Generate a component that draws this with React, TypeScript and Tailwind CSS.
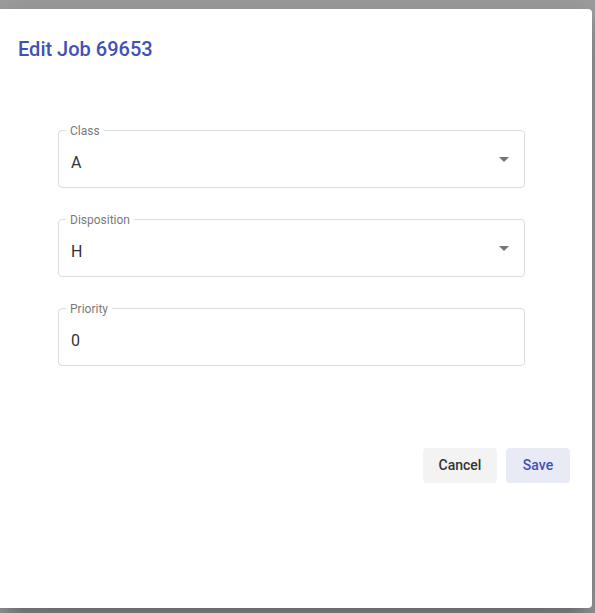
import { ReactNode } from "react";

const font = { fontFamily: "Roboto, 'Liberation Sans', sans-serif" };

const ArrowDrop = () => (
  <svg
    viewBox="0 0 24 24"
    className="absolute right-[8px] top-[16px] h-6 w-6 fill-[#757575]"
  >
    <path d="M7 10l5 5 5-5z" />
  </svg>
);

const Field = ({
  label,
  value,
  select,
}: {
  label: string;
  value: string;
  select?: boolean;
}) => (
  <div className="relative h-[58px] w-[467px] rounded-[4px] border border-[#dcdcdc]">
    <span className="absolute left-[7px] top-[-6px] bg-white px-[4px] text-[12px] leading-[12px] text-[#7a7a7a]">
      {label}
    </span>
    <div className="pl-3 pt-[20px] text-[16px] leading-[24px] text-[#333]">
      {value}
    </div>
    {select && <ArrowDrop />}
  </div>
);

const Btn = ({
  children,
  className,
}: {
  children: ReactNode;
  className: string;
}) => (
  <button
    className={`h-[35px] rounded-[4px] text-[14px] font-medium ${className}`}
  >
    {children}
  </button>
);

export default function App() {
  return (
    <div
      style={font}
      className="h-[613px] w-[595px] overflow-hidden bg-[#a0a0a0] pt-[9px]"
    >
      <div className="flex h-[599px] w-[592px] flex-col rounded-r-[4px] bg-white shadow-[0_11px_15px_-7px_rgba(0,0,0,0.2),0_24px_38px_3px_rgba(0,0,0,0.14),0_9px_46px_8px_rgba(0,0,0,0.12)]">
        <h2 className="pl-[18px] pt-[24px] text-[20px] font-medium leading-[32px] text-[#3f51b5]">
          Edit Job 69653
        </h2>
        <div className="ml-[58px] mt-[65px] flex flex-col gap-[31px]">
          <Field label="Class" value="A" select />
          <Field label="Disposition" value="H" select />
          <Field label="Priority" value="0" />
        </div>
        <div className="mr-[22px] mt-[82px] flex justify-end gap-[9px]">
          <Btn className="w-[74px] bg-[#f3f3f3] text-[#333]">Cancel</Btn>
          <Btn className="w-[64px] bg-[#e8eaf6] text-[#3f51b5]">Save</Btn>
        </div>
      </div>
    </div>
  );
}
